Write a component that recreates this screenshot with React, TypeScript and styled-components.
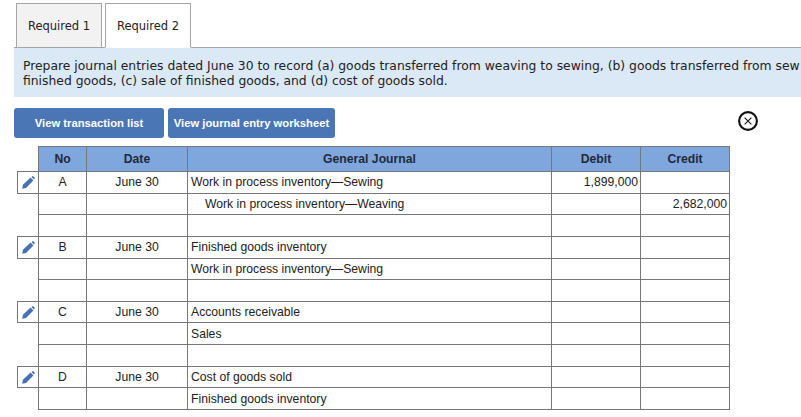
import React from "react";
import styled, { createGlobalStyle } from "styled-components";

const Global = createGlobalStyle`
  html, body { margin: 0; padding: 0; background: #fff; overflow: hidden; }
  #root { width: 801px; height: 417px; overflow: hidden; }
`;

const Page = styled.div`
  width: 801px;
  height: 417px;
  overflow: hidden;
  padding-top: 3px;
  box-sizing: border-box;
`;

const Tabs = styled.div`
  display: flex;
  gap: 3px;
  margin-left: 14px;
  padding-left: 2px;
  height: 45px;
  box-sizing: border-box;
  border-bottom: 1px solid #a6a6a6;
`;

const Tab = styled.div<{ $active?: boolean }>`
  width: 86px;
  height: 45px;
  box-sizing: border-box;
  border: 1px solid #a6a6a6;
  border-bottom: ${(p) => (p.$active ? "1px solid #fff" : "1px solid #a6a6a6")};
  background: ${(p) => (p.$active ? "#fff" : "#f2f2f2")};
  font: 11.5px/1 "DejaVu Sans", Verdana, sans-serif;
  color: #222;
  display: flex;
  align-items: center;
  justify-content: center;
  padding-top: 3px;
`;

const Prompt = styled.div`
  margin-left: 14px;
  height: 49px;
  box-sizing: border-box;
  background: #dbe8f6;
  padding: 11px 0 0 9px;
  font: 12.35px/15px "DejaVu Sans", Verdana, sans-serif;
  color: #222;
`;

const PromptLine = styled.div`
  white-space: nowrap;
  width: 778px;
  overflow: hidden;
`;

const Toolbar = styled.div`
  display: flex;
  align-items: center;
  gap: 4px;
  margin: 11px 0 0 14px;
  height: 30px;
`;

const ActionButton = styled.div<{ $w: number }>`
  width: ${(p) => p.$w}px;
  height: 30px;
  background: #4a76b5;
  border-radius: 3px;
  color: #fff;
  font: bold 11.25px/30px "Liberation Sans", Arial, sans-serif;
  text-align: center;
  white-space: nowrap;
`;

const CloseSlot = styled.div`
  margin-left: auto;
  margin-right: 43px;
  margin-top: -5px;
  display: flex;
`;

const Ledger = styled.table`
  margin: 8px 0 0 17px;
  border-collapse: collapse;
  table-layout: fixed;
  width: 713px;
  font: 12.2px "Liberation Sans", Arial, sans-serif;
  color: #222;
`;

const HeadCell = styled.th`
  background: #7fa7dd;
  border: 1px solid #777;
  padding: 0 0 1px;
  height: 23px;
  font: bold 12.2px "Liberation Sans", Arial, sans-serif;
  color: #1f2a3a;
  text-align: center;
`;

const BlankCorner = styled.th`
  padding: 0;
  border: none;
  border-bottom: 1px solid #777;
  background: #fff;
`;

const Row = styled.tr<{ $h: number }>`
  height: ${(p) => p.$h}px;
`;

const Cell = styled.td<{ $align?: string; $indent?: number; $low?: boolean }>`
  border: 1px solid #777;
  padding: ${(p) => {
    const bottom = p.$low ? 0 : 1;
    if (p.$align === "right") return `0 2px ${bottom}px 0`;
    if (p.$align === "center") return `0 0 ${bottom}px`;
    return `0 0 ${bottom}px ${p.$indent ?? 3}px`;
  }};
  text-align: ${(p) => p.$align ?? "left"};
  white-space: nowrap;
  overflow: hidden;
  line-height: 14px;
`;

const EditCell = styled.td<{ $show: boolean }>`
  padding: 0;
  border: ${(p) => (p.$show ? "1px solid #777" : "none")};
  border-right: 1px solid #777;
  text-align: center;
  vertical-align: middle;
  line-height: 0;
`;

const Pencil = () => (
  <svg width="13" height="13" viewBox="0 0 13 13">
    <path d="M0.2 12.8 L0.9 8.8 L8.6 1.6 L11.4 4.4 L4 12 Z" fill="#4a70b4" />
    <path d="M9.5 1 L10.5 0.2 Q11 -0.1 11.5 0.4 L12.6 1.5 Q13 2 12.6 2.5 L11.9 3.5 Z" fill="#4a70b4" />
  </svg>
);

const CloseIcon = () => (
  <svg width="20" height="20" viewBox="0 0 20 20">
    <circle cx="10" cy="10" r="8.9" fill="#fff" stroke="#111" strokeWidth="2.1" />
    <path d="M6.6 6.6 L13.4 13.4 M13.4 6.6 L6.6 13.4" stroke="#222" strokeWidth="1.2" fill="none" />
  </svg>
);

type Entry = { edit?: boolean; no?: string; date?: string; account?: string; indent?: number; debit?: string; credit?: string; h: number; low?: boolean };

const rows: Entry[] = [
  { edit: true, no: "A", date: "June 30", account: "Work in process inventory—Sewing", debit: "1,899,000", h: 22 },
  { account: "Work in process inventory—Weaving", indent: 17, credit: "2,682,000", h: 21 },
  { h: 22 },
  { edit: true, no: "B", date: "June 30", account: "Finished goods inventory", h: 22 },
  { account: "Work in process inventory—Sewing", h: 21 },
  { h: 22 },
  { edit: true, no: "C", date: "June 30", account: "Accounts receivable", h: 21 },
  { account: "Sales", h: 22, low: true },
  { h: 22 },
  { edit: true, no: "D", date: "June 30", account: "Cost of goods sold", h: 21 },
  { account: "Finished goods inventory", h: 22, low: true },
];

export default function App() {
  return (
    <Page>
      <Global />
      <Tabs>
        <Tab>Required 1</Tab>
        <Tab $active>Required 2</Tab>
      </Tabs>
      <Prompt>
        <PromptLine>Prepare journal entries dated June 30 to record (a) goods transferred from weaving to sewing, (b) goods transferred from sew</PromptLine>
        <PromptLine>finished goods, (c) sale of finished goods, and (d) cost of goods sold.</PromptLine>
      </Prompt>
      <Toolbar>
        <ActionButton $w={150}>View transaction list</ActionButton>
        <ActionButton $w={167}>View journal entry worksheet</ActionButton>
        <CloseSlot>
          <CloseIcon />
        </CloseSlot>
      </Toolbar>
      <Ledger>
        <colgroup>
          <col style={{ width: 21 }} />
          <col style={{ width: 48 }} />
          <col style={{ width: 101 }} />
          <col style={{ width: 364 }} />
          <col style={{ width: 89 }} />
          <col style={{ width: 89 }} />
        </colgroup>
        <thead>
          <tr>
            <BlankCorner />
            <HeadCell>No</HeadCell>
            <HeadCell>Date</HeadCell>
            <HeadCell>General Journal</HeadCell>
            <HeadCell>Debit</HeadCell>
            <HeadCell>Credit</HeadCell>
          </tr>
        </thead>
        <tbody>
          {rows.map((r, i) => (
            <Row key={i} $h={r.h}>
              <EditCell $show={!!r.edit}>{r.edit && <Pencil />}</EditCell>
              <Cell $align="center">{r.no}</Cell>
              <Cell $align="center">{r.date}</Cell>
              <Cell $indent={r.indent} $low={r.low}>{r.account}</Cell>
              <Cell $align="right">{r.debit}</Cell>
              <Cell $align="right">{r.credit}</Cell>
            </Row>
          ))}
        </tbody>
      </Ledger>
    </Page>
  );
}
